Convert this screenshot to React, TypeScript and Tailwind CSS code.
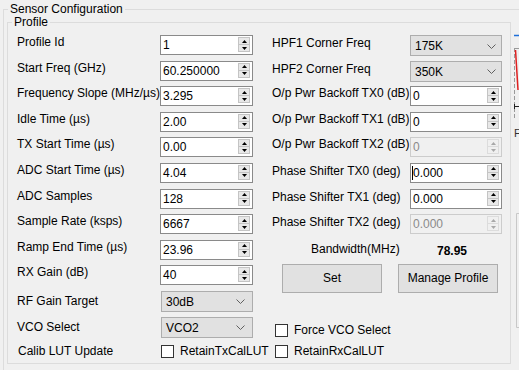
import React from "react";

const Tri = ({ up, color }: { up?: boolean; color: string }) => (
  <svg width="5" height="3" viewBox="0 0 5 3">
    {up ? <path d="M0 3 L2.5 0 L5 3 Z" fill={color} /> : <path d="M0 0 L2.5 3 L5 0 Z" fill={color} />}
  </svg>
);

const Spin = ({ value, disabled, caret, w }: { value: string; disabled?: boolean; caret?: boolean; w: string }) => (
  <div
    className={`flex h-[20px] shrink-0 ${w} items-stretch border ${
      disabled ? "border-[#cccccc] bg-[#f0f0f0] text-[#8a8a8a]" : "border-[#8a8a8a] bg-white text-black"
    }`}
  >
    <div className="relative flex-1 pl-[2px] leading-[18px]">
      {caret && <span className="absolute left-[1px] top-[2px] h-[14px] w-px bg-black" />}
      {value}
    </div>
    <div className="flex flex-col py-[1px] pr-[2px]">
      <div
        className={`flex h-[8px] w-[12px] items-center justify-center border ${
          disabled ? "border-[#dcdcdc] bg-[#f0f0f0]" : "border-[#c4c4c4] bg-[#e8e8e8]"
        }`}
      >
        <Tri up color={disabled ? "#a8a8a8" : "#000"} />
      </div>
      <div
        className={`-mt-px flex h-[8px] w-[12px] items-center justify-center border ${
          disabled ? "border-[#dcdcdc] bg-[#f0f0f0]" : "border-[#c4c4c4] bg-[#e8e8e8]"
        }`}
      >
        <Tri color={disabled ? "#a8a8a8" : "#000"} />
      </div>
    </div>
  </div>
);

const Select = ({ value, w, pr }: { value: string; w: string; pr: string }) => (
  <div className={`flex h-[21px] shrink-0 ${w} items-center justify-between border border-[#adadad] bg-[#e1e1e1] pl-[4px] ${pr}`}>
    <span className="pt-[2px] leading-[17px]">{value}</span>
    <svg width="9" height="5" viewBox="0 0 9 5" className="mt-[1px]">
      <path d="M0.5 0.5 L4.5 4.5 L8.5 0.5" stroke="#606060" fill="none" strokeWidth="1" />
    </svg>
  </div>
);

const Check = () => <span className="block h-[13px] w-[13px] shrink-0 border border-[#333333] bg-white" />;

const LRow = ({ label, children, pt }: { label: string; children: React.ReactNode; pt?: string }) => (
  <div className="flex h-[25.6px] items-start">
    <div className={`w-[143px] shrink-0 whitespace-nowrap leading-[15px] ${pt ?? ""}`}>{label}</div>
    {children}
  </div>
);

const RRow = ({ label, children, pt }: { label: string; children: React.ReactNode; pt?: string }) => (
  <div className="flex h-[25.6px] items-start">
    <div className={`w-[138px] shrink-0 whitespace-nowrap leading-[15px] ${pt ?? ""}`}>{label}</div>
    {children}
  </div>
);

export default function App() {
  const lw = "w-[93px]";
  const rw = "w-[92px]";
  return (
    <div className="relative h-[370px] w-[519px] overflow-hidden bg-[#f0f0f0] font-['Liberation_Sans',Arial,sans-serif] text-[12px] text-black">
      <div className="pl-[3px] pt-[2px]">
        <fieldset className="h-[400px] w-[560px] border border-[#dcdcdc]">
          <legend className="ml-[4px] px-[2px] leading-[15px]">Sensor Configuration</legend>
          <fieldset className="-mt-[2px] ml-[3px] h-[349px] w-[504px] border border-[#dcdcdc]">
            <legend className="ml-[4px] px-[2px] leading-[15px]">Profile</legend>
            <div className="flex pl-[9px] pt-[5px]">
              {/* left column */}
              <div className="flex w-[236px] shrink-0 flex-col">
                <LRow label="Profile Id"><Spin w={lw} value="1" /></LRow>
                <LRow label="Start Freq (GHz)"><Spin w={lw} value="60.250000" /></LRow>
                <LRow label="Frequency Slope (MHz/µs)"><Spin w={lw} value="3.295" /></LRow>
                <LRow label="Idle Time (µs)"><Spin w={lw} value="2.00" /></LRow>
                <LRow label="TX Start Time (µs)"><Spin w={lw} value="0.00" /></LRow>
                <LRow label="ADC Start Time (µs)"><Spin w={lw} value="4.04" /></LRow>
                <LRow label="ADC Samples"><Spin w={lw} value="128" /></LRow>
                <LRow label="Sample Rate (ksps)"><Spin w={lw} value="6667" /></LRow>
                <LRow label="Ramp End Time (µs)"><Spin w={lw} value="23.96" /></LRow>
                <LRow label="RX Gain (dB)"><Spin w={lw} value="40" /></LRow>
                <LRow label="RF Gain Target" pt="pt-[3px]"><div className="ml-px"><Select w="w-[92px]" pr="pr-[7px]" value="30dB" /></div></LRow>
                <LRow label="VCO Select" pt="pt-[3px]"><div className="ml-px"><Select w="w-[92px]" pr="pr-[7px]" value="VCO2" /></div></LRow>
                <div className="mt-[3px] flex h-[13px] items-center">
                  <div className="w-[143px] shrink-0 whitespace-nowrap pl-px leading-[15px]">Calib LUT Update</div>
                  <div className="ml-px"><Check /></div>
                  <span className="ml-[6px] whitespace-nowrap leading-[15px]">RetainTxCalLUT</span>
                </div>
              </div>
              {/* right column */}
              <div className="ml-[19px] flex w-[230px] shrink-0 flex-col">
                <RRow label="HPF1 Corner Freq" pt="pt-[1px]"><Select w={rw} pr="pr-[5px]" value="175K" /></RRow>
                <RRow label="HPF2 Corner Freq" pt="pt-[1px]"><Select w={rw} pr="pr-[5px]" value="350K" /></RRow>
                <RRow label="O/p Pwr Backoff TX0 (dB)"><Spin w={rw} value="0" /></RRow>
                <RRow label="O/p Pwr Backoff TX1 (dB)"><Spin w={rw} value="0" /></RRow>
                <RRow label="O/p Pwr Backoff TX2 (dB)"><Spin w={rw} value="0" disabled /></RRow>
                <RRow label="Phase Shifter TX0 (deg)" pt="pt-[1px]"><Spin w={rw} value="0.000" caret /></RRow>
                <RRow label="Phase Shifter TX1 (deg)" pt="pt-[1px]"><Spin w={rw} value="0.000" /></RRow>
                <RRow label="Phase Shifter TX2 (deg)" pt="pt-[1px]"><Spin w={rw} value="0.000" disabled /></RRow>
                <div className="flex h-[25.6px] items-start pl-[39px] pt-[2px]">
                  <span className="w-[126px] shrink-0 whitespace-nowrap leading-[15px]">Bandwidth(MHz)</span>
                  <span className="pt-[2px] font-bold leading-[15px]">78.95</span>
                </div>
                <div className="-mt-px flex h-[29px] pl-[10px]">
                  <button className="h-[29px] w-[100px] shrink-0 border border-[#adadad] bg-[#e1e1e1] leading-[15px]">Set</button>
                  <button className="ml-[16px] h-[29px] w-[100px] shrink-0 border border-[#adadad] bg-[#e1e1e1] leading-[15px]">Manage Profile</button>
                </div>
                <div className="mt-[31px] flex h-[13px] items-center pl-[3px]">
                  <Check />
                  <span className="ml-[6px] whitespace-nowrap leading-[15px]">Force VCO Select</span>
                </div>
                <div className="mt-[8px] flex h-[13px] items-center pl-[3px]">
                  <Check />
                  <span className="ml-[6px] whitespace-nowrap leading-[15px]">RetainRxCalLUT</span>
                </div>
              </div>
            </div>
          </fieldset>
        </fieldset>
      </div>
      {/* clipped neighbouring panel at the right edge */}
      <svg className="absolute left-[511px] top-0" width="8" height="370" viewBox="0 0 8 370">
        <path d="M3 35.5 H8" stroke="#1e6fd9" strokeWidth="1.5" />
        <path d="M3.5 48 V120" stroke="#9a9a9a" strokeDasharray="4 2" />
        <path d="M3.5 48.5 H8" stroke="#9a9a9a" />
        <path d="M4.5 50 L7 90" stroke="#e02020" strokeWidth="1.5" fill="none" />
        <path d="M3 106.5 H8 M3.5 104 V109" stroke="#222" />
        <path d="M8 213.5 H5.5 V327.5 H8" stroke="#c8c8c8" fill="none" />
      </svg>
      <span className="absolute left-[514px] top-[127px] text-[11px] leading-[13px] text-[#333]">F</span>
    </div>
  );
}
